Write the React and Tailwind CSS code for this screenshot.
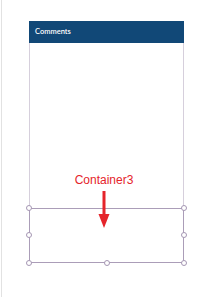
import React from 'react'

function Handle({ className }) {
  return (
    <div
      className={`absolute w-[6px] h-[6px] rounded-full bg-white border border-[#a596b3] ${className}`}
    />
  )
}

export default function App() {
  return (
    <div className="w-[216px] h-[300px] bg-white flex items-start overflow-hidden">
      {/* page edge */}
      <div className="ml-px w-px h-[297px] bg-[#e2e2e2]" />

      {/* screen column */}
      <div className="relative ml-[27px] mt-[21px] w-[155px] flex flex-col">
        <div
          className="h-[22px] bg-[#114877] flex items-center px-[6px] text-white text-[7.5px] font-semibold"
          style={{ fontFamily: 'Lato, "Open Sans", sans-serif' }}
        >
          Comments
        </div>

        <div className="h-[165px] border-x border-[#d6cfdc] flex flex-col items-center justify-end pb-[22px]">
          <span
            className="text-[12px] leading-none text-[#e5242b] pr-[5px]"
            style={{ fontFamily: '"Liberation Sans", Arial, sans-serif' }}
          >
            Container3
          </span>
        </div>

        {/* selected container */}
        <div className="relative h-[55px] border border-[#ab9db8]">
          <Handle className="-left-[4px] -top-[4px]" />
          <Handle className="-right-[4px] -top-[4px]" />
          <Handle className="-left-[4px] top-[23px]" />
          <Handle className="-right-[4px] top-[23px]" />
          <Handle className="-left-[4px] -bottom-[4px]" />
          <Handle className="-right-[4px] -bottom-[4px]" />
          <Handle className="left-[74px] -bottom-[4px]" />
        </div>

        {/* arrow */}
        <svg
          className="absolute left-[69px] top-[170px]"
          width="12"
          height="38"
          viewBox="0 0 12 38"
        >
          <rect x="4.5" y="0" width="3" height="26" fill="#e5242b" />
          <polygon points="0.5,23 11.5,23 6,37" fill="#e5242b" />
        </svg>
      </div>
    </div>
  )
}
